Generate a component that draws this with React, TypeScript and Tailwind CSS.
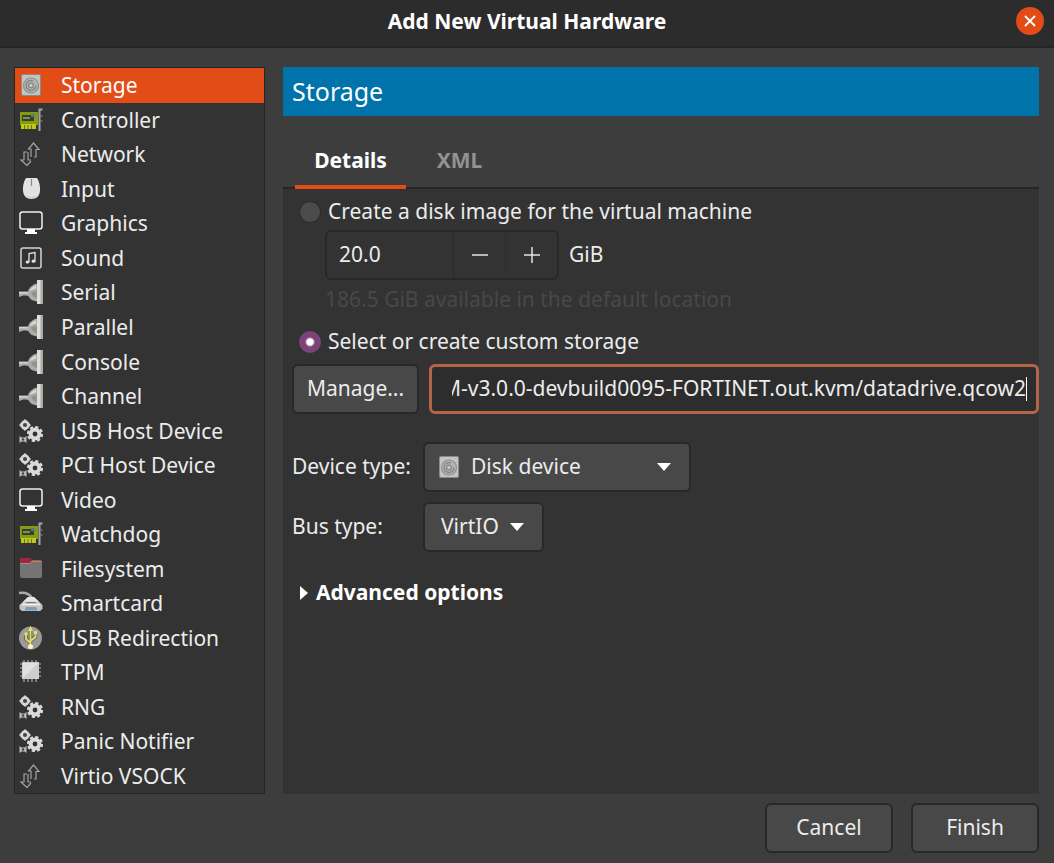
import { useEffect, useRef, useState } from "react";
import type { ReactNode } from "react";

const DiskIcon = () => (
  <svg viewBox="0 0 24 24" className="h-6 w-6">
    <rect x="2" y="1" width="20" height="22" rx="2" fill="#8b8b89" />
    <rect x="3" y="2" width="18" height="20" rx="1" fill="#c3c3c1" />
    <circle cx="12" cy="12.5" r="7.5" fill="#b4b4b2" stroke="#8f8f8d" strokeWidth="1.2" />
    <path d="M17 12.5a5 5 0 1 1-3-4.6" fill="none" stroke="#858583" strokeWidth="1.4" />
    <circle cx="12" cy="12.5" r="2.4" fill="#c9c9c7" stroke="#858583" strokeWidth="1.3" />
  </svg>
);

const CardIcon = () => (
  <svg viewBox="0 0 24 24" className="h-6 w-6">
    <rect x="1" y="4" width="18" height="13" fill="#889a12" />
    <path d="M2 16h15v5H2z" fill="#b9cc1c" />
    <path d="M5.5 17v4M9 17v4M12.5 17v4" stroke="#69780a" strokeWidth="1" />
    <path d="M3 7h9l3 1v5H3z" fill="#38431c" />
    <path d="M4 10h7" stroke="#91a0a5" strokeWidth="1.5" />
    <rect x="12" y="6" width="4" height="3" fill="#4d7897" />
    <path d="M23.5 1.5h-3V23" fill="none" stroke="#a4a7a2" strokeWidth="2" />
    <path d="M21 8h2.5M21 13h2.5" stroke="#777a75" strokeWidth="1.5" />
  </svg>
);

const NetworkIcon = () => (
  <svg viewBox="0 0 24 24" className="h-6 w-6" fill="none" stroke="#a3a3a3" strokeWidth="1.2">
    <path d="M8 10H5v8H2l6 5.500 4-4.500" />
    <path d="M9 10v8h3" />
    <path d="M12 15V7H9.500L14.500 1l5.500 6.500h-3V15h-2" />
  </svg>
);

const MouseIcon = () => (
  <svg viewBox="0 0 24 24" className="h-6 w-6">
    <path d="M7 1h11c2 3 3.500 8 3 13-.5 5-3.500 8-8.500 8s-8-3-8.500-8C3.500 9 5 4 7 1z" fill="#e2e2e0" />
    <path d="M12.5 2v7" stroke="#8a8a88" strokeWidth="1.2" />
    <path d="M8 19c3 2 6 2 9 0" stroke="#c4c4c2" fill="none" />
  </svg>
);

const MonitorIcon = () => (
  <svg viewBox="0 0 24 24" className="h-6 w-6">
    <rect x="1" y="1" width="22" height="17" rx="2.5" fill="none" stroke="#f0f0f0" strokeWidth="1.5" />
    <path d="M8 18h8v3h2v2H6v-2h2z" fill="#fff" />
  </svg>
);

const SoundIcon = () => (
  <svg viewBox="0 0 24 24" className="h-6 w-6">
    <rect x="2" y="2" width="20" height="20" rx="2" fill="none" stroke="#d5d5d5" strokeWidth="1.5" />
    <path d="M10 16V7.500l6-1V15" fill="none" stroke="#e2e2e2" strokeWidth="1.3" />
    <ellipse cx="8.5" cy="16" rx="1.9" ry="1.6" fill="#e2e2e2" />
    <ellipse cx="14.5" cy="15.2" rx="1.9" ry="1.6" fill="#e2e2e2" />
  </svg>
);

const SerialIcon = () => (
  <svg viewBox="0 0 24 24" className="h-6 w-6">
    <path d="M0 11.500h10v4.500c-4-1-7-.5-10 1z" fill="#aaaba6" />
    <path d="M0 12h10v1.500H0z" fill="#d4d5d1" />
    <path d="M18 3.500c-4.500 1-8 4-9 8v4c1.500 3.500 4.500 5.500 9 6z" fill="#abada7" />
    <path d="M17 5.500c-3 1-5.500 3-6.500 6 2-1.500 4-2.500 6.500-3z" fill="#dcddd9" />
    <path d="M12 12.500c2-1 4-1.500 6-1.500v7c-3-.5-5-2.500-6-5.500z" fill="#90928b" />
    <rect x="18" y="0" width="6" height="24" fill="#a9aba5" />
    <rect x="18" y="0" width="3.5" height="24" fill="#dfe0dc" />
  </svg>
);

const GearsIcon = () => (
  <svg viewBox="0 0 24 24" className="h-6 w-6" fill="none">
    <path d="M6 0l6 6-6 6-6-6z" fill="#d6d6d6" />
    <circle cx="6" cy="6" r="4.5" fill="#d6d6d6" />
    <circle cx="6" cy="6" r="2" fill="#444444" />
    <circle cx="16" cy="15" r="4.4" stroke="#dadada" strokeWidth="4" />
    <circle cx="16" cy="15" r="7" stroke="#dadada" strokeWidth="2.2" strokeDasharray="3.2 2.3" />
    <path d="M.5 17l2 1.500h3l2-1.500v7l-2-1.500h-3L.5 24z" fill="#bdbdbd" />
    <circle cx="4" cy="20.5" r="1.2" fill="#444444" />
  </svg>
);

const FolderIcon = () => (
  <svg viewBox="0 0 24 24" className="h-6 w-6">
    <path d="M2 1h9l2 2h8c1 0 2 1 2 2v3H1V2z" fill="#a3263f" />
    <path d="M13 3h8c1 0 1.500.5 1.500 1.500H12z" fill="#d04a2c" />
    <path d="M1 6h10l2-2h9c.6 0 1 .4 1 1v14c0 1.200-.8 2-2 2H3c-1.200 0-2-.8-2-2z" fill="#747474" />
    <path d="M1.500 6.500H11l2-2h9.500" fill="none" stroke="#939393" />
  </svg>
);

const SmartcardIcon = () => (
  <svg viewBox="0 0 24 24" className="h-6 w-6">
    <path d="M0 2c6-1 10 0 13 5" fill="none" stroke="#a8aba8" strokeWidth="2.5" />
    <path d="M9 6h6l8.500 8v4L21 20H3l-2.500-2v-4z" fill="#c3c5c2" />
    <path d="M9 6h6l5 5H4z" fill="#e6e7e4" />
    <path d="M3 13.500h18" stroke="#f3f3f1" strokeWidth="1.5" />
    <path d="M7 11.500h10" stroke="#777a77" strokeWidth="1.2" />
    <path d="M7 16h10l1.500 3.500h-13z" fill="#7f9bb5" />
  </svg>
);

const UsbIcon = () => (
  <svg viewBox="0 0 24 24" className="h-6 w-6">
    <circle cx="11.5" cy="12" r="11.5" fill="#9a9b98" />
    <path d="M11.5 3v17M11.5 17L7 13V8M11.5 15l5-4V7" fill="none" stroke="#5f5f45" strokeWidth="3.4" />
    <path d="M11.5 3v17M11.5 17L7 13V8M11.5 15l5-4V7" fill="none" stroke="#e6df72" strokeWidth="1.8" />
    <path d="M11.5 0l2.5 5H9z" fill="#e6df72" />
    <circle cx="7" cy="8" r="1.8" fill="#e6df72" />
    <rect x="15" y="5" width="3" height="3" fill="#e6df72" />
    <circle cx="11.5" cy="20.5" r="2.5" fill="#fbf6c0" />
  </svg>
);

const ChipIcon = () => (
  <svg viewBox="0 0 24 24" className="h-6 w-6">
    <path
      d="M5 0v22M9 0v22M13 0v22M17 0v22M1 4h21M1 8h21M1 12h21M1 16h21"
      stroke="#8b8d8a"
      strokeWidth="1.6"
    />
    <rect x="3" y="2" width="17" height="17" fill="#cdcfcb" />
    <path d="M4 3h15L4 18z" fill="#e0e1de" />
  </svg>
);

const hardware: { name: string; icon: ReactNode }[] = [
  { name: "Storage", icon: <DiskIcon /> },
  { name: "Controller", icon: <CardIcon /> },
  { name: "Network", icon: <NetworkIcon /> },
  { name: "Input", icon: <MouseIcon /> },
  { name: "Graphics", icon: <MonitorIcon /> },
  { name: "Sound", icon: <SoundIcon /> },
  { name: "Serial", icon: <SerialIcon /> },
  { name: "Parallel", icon: <SerialIcon /> },
  { name: "Console", icon: <SerialIcon /> },
  { name: "Channel", icon: <SerialIcon /> },
  { name: "USB Host Device", icon: <GearsIcon /> },
  { name: "PCI Host Device", icon: <GearsIcon /> },
  { name: "Video", icon: <MonitorIcon /> },
  { name: "Watchdog", icon: <CardIcon /> },
  { name: "Filesystem", icon: <FolderIcon /> },
  { name: "Smartcard", icon: <SmartcardIcon /> },
  { name: "USB Redirection", icon: <UsbIcon /> },
  { name: "TPM", icon: <ChipIcon /> },
  { name: "RNG", icon: <GearsIcon /> },
  { name: "Panic Notifier", icon: <GearsIcon /> },
  { name: "Virtio VSOCK", icon: <NetworkIcon /> },
];

const Sidebar = () => {
  const [selected, setSelected] = useState("Storage");
  return (
    <ul className="flex w-[251px] shrink-0 flex-col border border-[#262626] bg-[#333333]">
      {hardware.map((item) => (
        <li key={item.name} className="flex flex-1">
          <button
            type="button"
            onClick={() => setSelected(item.name)}
            className={`flex h-full w-full items-center gap-[18px] pl-1 text-left leading-8 ${
              selected === item.name ? "bg-[#e24c17] text-white" : ""
            }`}
          >
            {item.icon}
            {item.name}
          </button>
        </li>
      ))}
    </ul>
  );
};

const Arrow = () => (
  <svg viewBox="0 0 14 8" className="h-2 w-[14px]" fill="#ffffff">
    <path d="M0 0h14L7 8z" />
  </svg>
);

const buttonStyle =
  "h-[50px] rounded-md border-2 border-[#282828] bg-[#484848] text-center";

const radioStyle =
  "h-[22px] w-[22px] shrink-0 appearance-none rounded-full border border-[#292929] bg-[#4b4b4b] checked:border-[#7d4379] checked:bg-[radial-gradient(circle,#ffffff_3px,#7d4379_5px)]";

const StorageForm = () => {
  const [mode, setMode] = useState("custom");
  const pathRef = useRef<HTMLInputElement>(null);

  // keep the end of a long path in view
  useEffect(() => {
    if (pathRef.current) {
      pathRef.current.scrollLeft = pathRef.current.scrollWidth;
    }
  }, []);

  return (
    <form className="flex flex-1 flex-col bg-[#333333] pt-1 pl-[9px]">
      <label className="flex h-[37px] items-center gap-[7px] pl-[7px]">
        <input
          type="radio"
          name="mode"
          checked={mode === "create"}
          onChange={() => setMode("create")}
          className={radioStyle}
        />
        Create a disk image for the virtual machine
      </label>
      <div className="flex items-center gap-[10px] pl-[33px]">
        <div className="flex h-[50px] w-[234px] rounded-md border-2 border-[#282828]">
          <input
            type="text"
            aria-label="Disk size"
            defaultValue="20.0"
            className="w-0 flex-1 pl-3 outline-none"
          />
          <button
            type="button"
            aria-label="Decrease"
            className="flex w-[52px] items-center justify-center border-l border-[#2a2a2a]"
          >
            <svg viewBox="0 0 18 18" className="h-[18px] w-[18px]" stroke="#e4e4e4" strokeWidth="1.5">
              <path d="M1 9h16" />
            </svg>
          </button>
          <button
            type="button"
            aria-label="Increase"
            className="flex w-[52px] items-center justify-center border-l border-[#2f2f2f]"
          >
            <svg viewBox="0 0 18 18" className="h-[18px] w-[18px]" stroke="#e4e4e4" strokeWidth="1.5">
              <path d="M1 9h16M9 1v16" />
            </svg>
          </button>
        </div>
        <span>GiB</span>
      </div>
      <p className="h-[39px] pl-[33px] leading-[39px] text-[#484848]">
        186.5 GiB available in the default location
      </p>
      <label className="flex h-[45px] items-center gap-[7px] pl-[7px]">
        <input
          type="radio"
          name="mode"
          checked={mode === "custom"}
          onChange={() => setMode("custom")}
          className={radioStyle}
        />
        Select or create custom storage
      </label>
      <div className="flex gap-[10px]">
        <button type="button" className={`${buttonStyle} w-[127px] shrink-0`}>
          Manage...
        </button>
        <div className="relative flex h-[50px] flex-1 rounded-md border-[3px] border-[#b3654a] bg-[#2d2d2d] pr-[10px] pl-5">
          <input
            ref={pathRef}
            type="text"
            aria-label="Storage path"
            defaultValue="M-v3.0.0-devbuild0095-FORTINET.out.kvm/datadrive.qcow2"
            className="w-0 flex-1 text-right outline-none"
          />
          <span className="absolute top-[10px] right-[9px] h-6 w-px bg-white" />
        </div>
      </div>
      <div className="mt-7 grid grid-cols-[121px_1fr] items-center gap-[10px]">
        <label htmlFor="device-type">Device type:</label>
        <div className="relative w-[268px]">
          <select
            id="device-type"
            className={`${buttonStyle} w-full appearance-none pl-[46px] text-left`}
          >
            <option>Disk device</option>
          </select>
          <span className="pointer-events-none absolute inset-y-0 left-[14px] flex items-center">
            <DiskIcon />
          </span>
          <span className="pointer-events-none absolute inset-y-0 right-5 flex items-center">
            <Arrow />
          </span>
        </div>
        <label htmlFor="bus-type">Bus type:</label>
        <div className="relative w-[121px]">
          <select
            id="bus-type"
            className={`${buttonStyle} w-full appearance-none pl-4 text-left`}
          >
            <option>VirtIO</option>
          </select>
          <span className="pointer-events-none absolute inset-y-0 right-5 flex items-center">
            <Arrow />
          </span>
        </div>
      </div>
      <button
        type="button"
        aria-expanded="false"
        className="mt-5 flex h-[42px] items-center gap-2 self-start pl-2 font-bold text-white"
      >
        <svg viewBox="0 0 8 14" className="h-[14px] w-2" fill="#ffffff">
          <path d="M0 0l8 7-8 7z" />
        </svg>
        Advanced options
      </button>
    </form>
  );
};

const App = () => {
  return (
    <div className="flex min-h-screen flex-col bg-[#3d3d3d] font-['Noto_Sans',sans-serif] text-[21px] text-[#ececec]">
      <header className="grid h-12 grid-cols-[1fr_auto_1fr] items-center border-b-2 border-[#242424] bg-[#2c2c2c] px-[10px]">
        <h1 className="col-start-2 pb-[2px] font-bold text-white">
          Add New Virtual Hardware
        </h1>
        <button
          type="button"
          aria-label="Close"
          className="mb-[5px] flex h-7 w-7 items-center justify-center justify-self-end rounded-full bg-[#e24c17]"
        >
          <svg viewBox="0 0 12 12" className="h-3 w-3" stroke="#ffffff" strokeWidth="1.8">
            <path d="M1 1l10 10M11 1L1 11" />
          </svg>
        </button>
      </header>
      <main className="flex flex-1 gap-[18px] pt-[19px] pr-[15px] pl-[14px]">
        <Sidebar />
        <section className="flex min-w-0 flex-1 flex-col">
          <h2 className="h-[49px] bg-[#0073ab] pl-[9px] text-[25px] leading-[49px] text-white">
            Storage
          </h2>
          <div
            role="tablist"
            className="flex pt-[15px] pl-3 font-bold shadow-[inset_0_-2px_0_#262626]"
          >
            <button
              type="button"
              role="tab"
              aria-selected="true"
              className="h-[58px] w-[111px] border-b-4 border-[#e24c17] pt-[6px] text-white"
            >
              Details
            </button>
            <button
              type="button"
              role="tab"
              aria-selected="false"
              className="h-[58px] w-[107px] border-b-4 border-transparent pt-[6px] text-[#929292]"
            >
              XML
            </button>
          </div>
          <StorageForm />
        </section>
      </main>
      <footer className="flex justify-end gap-[18px] px-[15px] pt-[9px] pb-[10px]">
        <button type="button" className={`${buttonStyle} w-[128px]`}>
          Cancel
        </button>
        <button type="button" className={`${buttonStyle} w-[128px]`}>
          Finish
        </button>
      </footer>
    </div>
  );
};

export default App;
